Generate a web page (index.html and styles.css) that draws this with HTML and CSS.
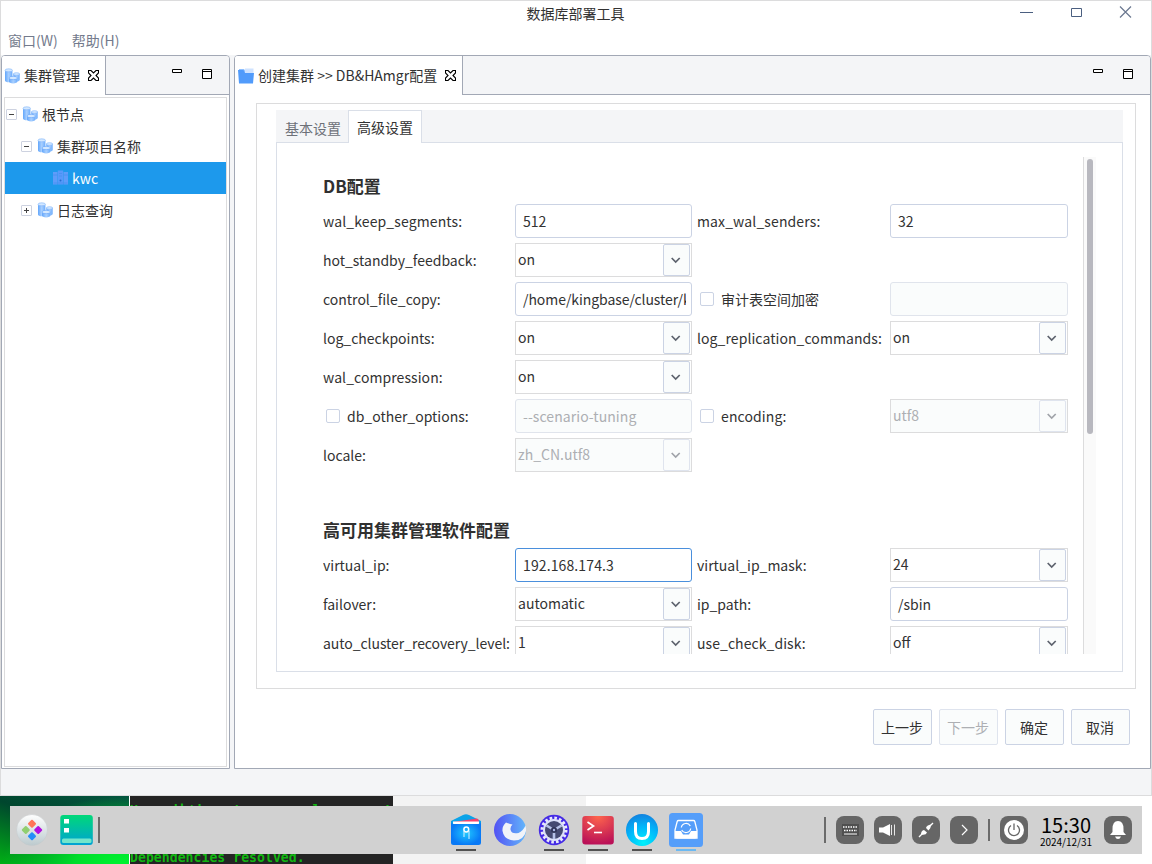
FILE: index.html
```html
<!DOCTYPE html>
<html lang="zh-CN">
<head>
<meta charset="utf-8">
<title>数据库部署工具</title>
<link rel="stylesheet" href="styles.css">
</head>
<body>
<svg class="defs" width="0" height="0">
  <defs>
    <linearGradient id="cyl" x1="0" x2="1" y1="0" y2="0"><stop offset="0" stop-color="#62a6fb"/><stop offset=".5" stop-color="#a9d0ff"/><stop offset="1" stop-color="#6cacfb"/></linearGradient>
    <symbol id="db" viewBox="0 0 16 16">
      <path d="M1 2.500v10c0 1 1.700 1.800 3.700 1.800s3.700-.8 3.700-1.800v-10z" fill="url(#cyl)"/>
      <ellipse cx="4.700" cy="2.300" rx="3.700" ry="1.500" fill="#d3e8ff" stroke="#7db4fa" stroke-width=".6"/>
      <path d="M9.300 6v6c0 .8 1.300 1.500 3.200 1.500s3.200-.7 3.200-1.500V6z" fill="url(#cyl)"/>
      <ellipse cx="12.500" cy="6" rx="3.200" ry="1.300" fill="#d3e8ff" stroke="#7db4fa" stroke-width=".6"/>
      <path d="M5 10v3.500c0 1 1.800 1.900 4.200 1.900s4.200-.9 4.200-1.900V10z" fill="url(#cyl)"/>
      <ellipse cx="9.200" cy="10" rx="4.200" ry="1.700" fill="#d3e8ff" stroke="#6ba8f9" stroke-width=".7"/>
    </symbol>
    <symbol id="close" viewBox="0 0 11 11">
      <path d="M.5.5h2.500L5.500 3 8 .5h2.500V3L8 5.500 10.500 8v2.500H8L5.500 8 3 10.500H.5V8L3 5.500.5 3z" fill="#fff" stroke="#000" stroke-width="1.100"/>
    </symbol>
    <symbol id="min" viewBox="0 0 10 4"><path d="M.5.5h9v3h-9z" fill="#fff" stroke="#000"/></symbol>
    <symbol id="max" viewBox="0 0 10 10"><path d="M.5.5h9v9h-9zM1 2.500h8" fill="#fff" stroke="#000"/></symbol>
    <symbol id="chev" viewBox="0 0 10 7"><path d="M.7 1l4 4 4-4" fill="none" stroke="currentColor" stroke-width="1.700"/></symbol>
  </defs>
</svg>

<div class="window">
  <header class="titlebar">
    <span class="title">数据库部署工具</span>
    <svg class="winctl" width="114" height="14" viewBox="0 0 114 14" fill="none" stroke="#4b5f80">
      <path d="M0 6.500h13M51.500 2.500h10v8h-10z"/><path d="M100 .5l11 11M111 .5l-11 11" stroke="#6b7890" stroke-width="1.200"/>
    </svg>
  </header>
  <nav class="menubar"><span>窗口(W)</span><span>帮助(H)</span></nav>

  <main class="work">
    <section class="panel left">
      <div class="panel-head">
        <div class="panel-tab"><svg class="ic16"><use href="#db"/></svg><span>集群管理</span><svg class="x"><use href="#close"/></svg></div>
        <div class="panel-tools"><svg class="min"><use href="#min"/></svg><svg class="max"><use href="#max"/></svg></div>
      </div>
      <div class="tree">
        <div class="node lv0"><i class="exp"></i><svg class="ic16"><use href="#db"/></svg><span>根节点</span></div>
        <div class="node lv1"><i class="exp"></i><svg class="ic16"><use href="#db"/></svg><span>集群项目名称</span></div>
        <div class="node lv2 selected">
          <svg class="ic16" viewBox="0 0 16 16"><path d="M1 2h4.500v12.500H1zM11.500 2H16v12.500h-4.500z" fill="#5e9cfa"/><path d="M5.800.5h5.400v14H5.800z" fill="#5799fb"/><path d="M1 5h4.500M11.500 5H16M7 3.500h3M7 6h3M1.500 13h14" stroke="#468ff0" stroke-width=".8"/><circle cx="8.500" cy="10.500" r="1" fill="#246fd0"/></svg>
          <span>kwc</span></div>
        <div class="node lv1"><i class="exp plus"></i><svg class="ic16"><use href="#db"/></svg><span>日志查询</span></div>
      </div>
    </section>

    <section class="panel right">
      <div class="panel-head">
        <div class="panel-tab"><svg class="ic16" viewBox="0 0 16 16"><path d="M1 1h5l1 1.500h8V8H1z" fill="#8fc0ff"/><path d="M7 .5h8.500V5H7z" fill="#d0e3ff"/><path d="M0 2h5.500l1.500 3H16l-1 10.500H1z" fill="#519bfb"/></svg><span>创建集群 &gt;&gt; DB&amp;HAmgr配置</span><svg class="x"><use href="#close"/></svg></div>
        <div class="panel-tools"><svg class="min"><use href="#min"/></svg><svg class="max"><use href="#max"/></svg></div>
      </div>
      <div class="editor">
        <div class="frame">
          <div class="tabs"><div class="tab">基本设置</div><div class="tab active">高级设置</div></div>
          <div class="tab-body">
            <div class="viewport">
              <div class="form">
                <h2>DB配置</h2>
                <label class="wide">wal_keep_segments:</label><div class="input">512</div>
                <label class="wide">max_wal_senders:</label><div class="input">32</div>

                <label>hot_standby_feedback:</label><div class="select"><span>on</span><b><svg><use href="#chev"/></svg></b></div>
                <span></span><span></span>

                <label>control_file_copy:</label><div class="input"><span class="clip">/home/kingbase/cluster/k</span></div>
                <label class="check"><i></i>审计表空间加密</label><div class="input off"></div>

                <label>log_checkpoints:</label><div class="select"><span>on</span><b><svg><use href="#chev"/></svg></b></div>
                <label class="slightly">log_replication_commands:</label><div class="select"><span>on</span><b><svg><use href="#chev"/></svg></b></div>

                <label class="slightly">wal_compression:</label><div class="select"><span>on</span><b><svg><use href="#chev"/></svg></b></div>
                <span></span><span></span>

                <label class="check"><i></i>db_other_options:</label><div class="input off slightly">--scenario-tuning</div>
                <label class="check wide"><i></i>encoding:</label><div class="select off"><span>utf8</span><b><svg><use href="#chev"/></svg></b></div>

                <label>locale:</label><div class="select off"><span>zh_CN.utf8</span><b><svg><use href="#chev"/></svg></b></div>
                <span></span><span></span>

                <h2 class="second">高可用集群管理软件配置</h2>
                <label>virtual_ip:</label><div class="input focus wide">192.168.174.3</div>
                <label>virtual_ip_mask:</label><div class="select"><span>24</span><b><svg><use href="#chev"/></svg></b></div>

                <label>failover:</label><div class="select"><span>automatic</span><b><svg><use href="#chev"/></svg></b></div>
                <label>ip_path:</label><div class="input">/sbin</div>

                <label class="narrow">auto_cluster_recovery_level:</label><div class="select"><span>1</span><b><svg><use href="#chev"/></svg></b></div>
                <label class="slightly">use_check_disk:</label><div class="select"><span>off</span><b><svg><use href="#chev"/></svg></b></div>
              </div>
              <div class="scroll"><div class="thumb"></div></div>
            </div>
          </div>
        </div>
        <div class="buttons"><button>上一步</button><button disabled>下一步</button><button>确定</button><button>取消</button></div>
      </div>
    </section>
  </main>
</div>

<div class="desktop">
  <div class="wall"></div>
  <div class="term"><div class="line1">Upgradi/d    t         l        t</div><div class="line2">Dependencies resolved.</div></div>
  <div class="pane"></div>
</div>

<footer class="taskbar">
  <div class="group start">
    <svg width="32" height="34" viewBox="0 0 32 34">
      <defs><linearGradient id="lg" x2="0" y2="1"><stop stop-color="#fff"/><stop offset="1" stop-color="#bccace"/></linearGradient>
      <linearGradient id="g1"><stop stop-color="#ff9650"/><stop offset="1" stop-color="#ff5a62"/></linearGradient><linearGradient id="g2"><stop stop-color="#a9d356"/><stop offset="1" stop-color="#72c98d"/></linearGradient></defs>
      <circle cx="16" cy="17" r="15.500" fill="url(#lg)" stroke="#c5c8ca" stroke-width=".5"/>
      <g stroke-linejoin="round" stroke-width="2"><path d="M16 7.800l3 3-3 3-3-3z" fill="url(#g1)" stroke="#ff7559"/><path d="M9.800 14l3 3-3 3-3-3z" fill="url(#g2)" stroke="#91cf70"/><path d="M22.200 14l3 3-3 3-3-3z" fill="#b210df" stroke="#b210df"/><path d="M16 20.200l3 3-3 3-3-3z" fill="#238df8" stroke="#238df8"/></g>
    </svg>
    <svg width="34" height="32" viewBox="0 0 34 32">
      <defs><linearGradient id="tg" x2="0" y2="1"><stop stop-color="#00d878"/><stop offset="1" stop-color="#00a2d4"/></linearGradient></defs>
      <rect x=".3" y="1" width="32.500" height="30" rx="3" fill="url(#tg)"/><path d="M4 5h5v4.500H4zM4 14h5v4.500H4z" fill="#fff"/><rect x="2" y="24.500" width="29.500" height="4.500" rx="1.500" fill="#72e5cb"/>
    </svg>
    <i class="bar"></i>
  </div>

  <div class="group apps">
    <div class="app"><svg viewBox="0 0 34 34"><defs><radialGradient id="a1"><stop stop-color="#20c8ff"/><stop offset="1" stop-color="#0879f6"/></radialGradient></defs>
      <path d="M2 8L14 2q3-1.500 6 0l12 6v12H2z" fill="#0ba3e8"/><path d="M4 9l24-3.500q3 1 1 6H4z" fill="#f6416c"/><path d="M4 8.500h26v3H4z" fill="#fff"/><path d="M2 8.500q0 2.500 3 2.500h24q3 0 3-2.500v21q0 2.500-2.500 2.500h-25Q2 32 2 29.500z" fill="url(#a1)"/><circle cx="17.300" cy="16.500" r="2.400" fill="none" stroke="#fff" stroke-width="1.500"/><path d="M15 18v6M20 18v8" stroke="#d8f2ff"/></svg><i></i></div>
    <div class="app none"><svg viewBox="0 0 34 34"><defs><linearGradient id="a2"><stop stop-color="#5252f3"/><stop offset="1" stop-color="#62b6fb"/></linearGradient></defs>
      <circle cx="17" cy="17" r="16" fill="url(#a2)"/><path d="M13 9.500Q9 13 9.500 18q1.500 9 11.500 9.500 10 0 12-9.500.3-2.500-.5-5.500Q30 18 25.500 20q-7 1.500-8-3.500-.3-3 2-5-4-1-6.500-2z" fill="#f0f3f9"/></svg><i></i></div>
    <div class="app"><svg viewBox="0 0 34 34"><circle cx="17" cy="17" r="15.200" fill="#452be5"/><circle cx="17" cy="17" r="11" fill="#dce1fa"/><circle cx="17" cy="17" r="12" fill="none" stroke="#e8eafa" stroke-width="3" stroke-dasharray="2.600 2.110"/><circle cx="17" cy="17" r="9" fill="#454a72"/><path d="M17 17L9.500 12.500M17 17l7.500-4.500M17 17v9" stroke="#b7c2e8" stroke-width="2.600"/><circle cx="17" cy="17" r="3" fill="#303458"/><circle cx="17" cy="17" r="1.200" fill="#aab7e5"/></svg><i></i></div>
    <div class="app"><svg viewBox="0 0 34 34"><defs><radialGradient id="a4" cx=".5" cy="0" r="1"><stop stop-color="#ff664c"/><stop offset="1" stop-color="#ba1057"/></radialGradient></defs><rect x="1.300" y="3" width="31.500" height="28.500" rx="3" fill="url(#a4)"/><path d="M6.500 9l6 4-6 4" fill="none" stroke="#fff" stroke-width="1.700"/><path d="M13 19.500h8" stroke="#fff" stroke-width="1.600"/></svg><i></i></div>
    <div class="app"><svg viewBox="0 0 34 34"><defs><radialGradient id="a5" cx=".55" cy=".9" r=".9"><stop stop-color="#00f0fb"/><stop offset=".55" stop-color="#00b7fb"/><stop offset="1" stop-color="#1383df"/></radialGradient></defs><circle cx="17" cy="17" r="16" fill="url(#a5)"/><path d="M10.500 10.500v8q0 7 6.500 7t6.500-7v-8" fill="none" stroke="#fff" stroke-width="3" stroke-linecap="round"/></svg><i></i></div>
    <div class="app current"><svg viewBox="0 0 34 34"><rect width="34" height="34" rx="3.500" fill="#559efa"/><path d="M9.500 7.500h15q1 0 1.300 1L28 17v8H6v-8l2.200-8.500q.3-1 1.300-1z" fill="none" stroke="#fff" stroke-width="1.300"/><path d="M6 18h6l2 3.500h6l2-3.500h6v5.500q0 2-2 2H8q-2 0-2-2z" fill="#fff"/><path d="M12.300 14.500a4.800 4.800 0 0 1 9-1.500M21.700 15.500a4.800 4.800 0 0 1-9 1.500" fill="none" stroke="#fff" stroke-width="1.200"/></svg><i></i></div>
  </div>

  <div class="group tray">
    <i class="bar"></i>
    <div class="chip"><svg viewBox="0 0 28 28"><rect x="6" y="8" width="17" height="12" fill="#4f4f4f"/><path d="M7 11h14M8 14.500h13" stroke="#fff" stroke-width="1.300" stroke-dasharray="1.500 1"/><path d="M8 18h13" stroke="#fff"/></svg></div>
    <div class="chip"><svg viewBox="0 0 28 28"><path d="M5 11.500h4L16 8v12l-7-3.500H5z" fill="#fff"/><path d="M17.500 9v10M20.500 8.500v11" stroke="#e8e8e8" stroke-width="1"/></svg></div>
    <div class="chip"><svg viewBox="0 0 28 28"><path d="M7 21l5-5M16 12l5-5" stroke="#fff" stroke-width="1.400"/><path d="M9 18.500q0-4 3-4.500l3 2.500q-1 3-6 2zM14 12q.5-3 5-3.500 0 4-2.500 6z" fill="#fff"/></svg></div>
    <div class="chip"><svg viewBox="0 0 28 28"><path d="M12 9l5 5-5 5" fill="none" stroke="#fff" stroke-width="1.200"/></svg></div>
    <i class="bar short"></i>
    <div class="chip"><svg viewBox="0 0 28 28"><circle cx="14" cy="14" r="10" fill="#fff"/><path d="M11 9.500a5.500 5.500 0 1 0 6 0M14 7.500v6.500" fill="none" stroke="#666" stroke-width="1.300"/></svg></div>
    <div class="clock"><span class="time">15:30</span><span class="date">2024/12/31</span></div>
    <div class="chip"><svg viewBox="0 0 28 28"><path d="M14 5q5.500 0 5.500 8v3l2.500 3H6l2.500-3v-3q0-8 5.500-8zM11 20.500h6q-1 2.500-3 2.500t-3-2.500z" fill="#fff"/></svg></div>
  </div>
</footer>
</body>
</html>
```
FILE: styles.css
```css
* { box-sizing: border-box; }
body {
  margin: 0; width: 1152px; height: 864px; overflow: hidden; position: relative;
  font: 14px/20px "Noto Sans CJK SC", sans-serif; color: #323232; background: #fff;
}
.defs { position: absolute; }
svg { display: block; flex: none; }

.window { height: 796px; border: 1px solid #dcdcdd; display: flex; flex-direction: column; background: #fff; }
.titlebar { height: 27px; display: flex; justify-content: flex-end; padding: 5px 17px 0 0; position: relative; }
.title { position: absolute; left: 0; right: 1px; top: 2px; text-align: center; }
.menubar { height: 27px; display: flex; gap: 14px; padding: 2px 7px; color: #737a8c; }

.work { flex: 1; display: flex; gap: 4px; padding-bottom: 26px; background: #f4f5f7; }
.panel { border: 1px solid #a2a8b5; border-radius: 4px 4px 0 0; background: #fff; display: flex; flex-direction: column; overflow: hidden; }
.left { width: 229px; }
.right { flex: 1; }
.panel-head { height: 39px; flex: none; display: flex; background: #f4f5f7; }
.panel-tab { display: flex; align-items: center; background: #fff; border-right: 1px solid #a2a8b5; padding-left: 2px; }
.left .panel-tab { width: 104px; }
.right .panel-tab { width: 228px; padding-left: 3px; }
.panel-tab span { margin-left: 4px; padding-bottom: 2px; white-space: nowrap; }
.ic16 { width: 16px; height: 16px; }
.x { width: 11px; height: 11px; margin: 0 0 1px 7.500px; }
.panel-tools { flex: 1; display: flex; justify-content: flex-end; align-items: flex-start; gap: 20px; padding: 13px 17px 0 0; border-bottom: 1px solid #a2a8b5; }
.min { width: 10px; height: 4px; }
.max { width: 10px; height: 10px; }

.tree { flex: 1; margin: 2px 2px 1px; border: 1px solid #dcdcdd; }
.node { height: 32px; display: flex; align-items: center; }
.node span { margin-left: 4px; line-height: 20px; }
.lv0 { padding-left: 1px; }
.lv1 { padding-left: 16px; }
.lv2 { padding-left: 47px; }
.selected { background: #1d99ec; color: #fff; }
.exp { width: 11px; height: 11px; border: 1px solid #cdd2e0; border-radius: 1px; margin-right: 5px; background: linear-gradient(#444, #444) center / 5px 1px no-repeat; }
.exp.plus { background: linear-gradient(#444, #444) center / 5px 1px no-repeat, linear-gradient(#444, #444) center / 1px 5px no-repeat; }

.editor { flex: 1; padding: 8px 14px 0 21px; display: flex; flex-direction: column; }
.frame { height: 586px; border: 1px solid #dcdcdd; padding: 6px 12px 16px 19px; display: flex; flex-direction: column; }
.tabs { height: 32px; background: #f4f5f7; display: flex; color: #6d7179; }
.tab { width: 73px; padding: 8px 0 0 9px; white-space: nowrap; }
.tab.active { width: 74px; height: 33px; margin-left: -1px; background: #fff; color: #323232; border: 1px solid #dadfe8; border-bottom: 0; padding: 6px 0 0 8px; position: relative; }
.tab-body { flex: 1; min-height: 0; border: 1px solid #dadfe8; padding: 14px 26px 17px 46px; }
.viewport { height: 497px; overflow: hidden; display: flex; justify-content: space-between; align-items: flex-start; }
.form { display: grid; grid-template-columns: 187px 177px 188px 178px; grid-template-rows: 42px; grid-auto-rows: auto; gap: 5px; }
.form h2 { grid-column: 1 / -1; margin: 0; font-size: 17px; line-height: 28px; padding-top: 15px; color: #303030; }
.form h2.second { height: 66px; padding-top: 39px; }
.form label { height: 34px; line-height: 35px; white-space: nowrap; }
.form .wide { letter-spacing: .12px; }
.slightly { letter-spacing: .07px; }
.narrow { letter-spacing: -.06px; }
.check { display: flex; padding-left: 3px; }
.check i { width: 14px; height: 14px; border: 1px solid #cbd3e4; border-radius: 2px; margin: 10px 7px 0 0; }
.input { height: 34px; border: 1px solid #cbd3e4; border-radius: 3px; padding: 0 5px 0 7px; line-height: 33px; overflow: hidden; white-space: nowrap; }
.clip { display: block; overflow: hidden; letter-spacing: -.06px; }
.focus { border-color: #4a8fdc; }
.select { height: 34px; border: 1px solid #dcdcdd; display: flex; justify-content: space-between; padding-right: 1px; padding-left: 2px; line-height: 31px; }
.select b { width: 27px; height: 32px; border: 1px solid #cbd3e4; border-radius: 2px; background: #fafcfc; padding: 12px 0 0 7px; color: #5d626d; }
.select b svg { width: 10px; height: 7px; }
.off { background: #fafcfc; color: #adafb3; border-color: #e0e4ec; }
.select.off { border-color: #dcdcdd; }
.off b { color: #a0a3a9; border-color: #dfe4ee; }
.scroll { width: 13px; height: 497px; border-left: 1px solid #dcdcdd; background: #fafafa; padding: 2px 3px; }
.thumb { width: 6px; height: 275px; border-radius: 3px; background: #b8b8bf; }
.buttons { display: flex; justify-content: flex-end; gap: 7px; padding: 20px 6px 0 0; }
button { font: inherit; color: inherit; width: 59px; height: 36px; border: 1px solid #cbd3e4; border-radius: 2px; background: #fafcfc; padding: 0 1px 1px 0; white-space: nowrap; }
button:disabled { color: #adafb3; border-color: #dfe4ee; }

.desktop { height: 68px; display: flex; }
.wall { width: 129px; background: radial-gradient(ellipse at 95% 105%, #00f532 0, #00dd2b 28%, transparent 70%), linear-gradient(20deg, #00b015, #00462e 55%, #045640); }
.term { width: 263px; margin-left: 1px; background: #242424; color: #11b711; font: bold 13.200px/16px "DejaVu Sans Mono", monospace; overflow: hidden; white-space: pre; }
.line1 { padding-top: 7px; height: 54px; }
.pane { width: 193px; background: #f3f3f3; }

.taskbar { position: absolute; left: 10px; top: 806px; width: 1132px; height: 48px; background: #d1d1d1; display: flex; justify-content: space-between; }
.group { display: flex; align-items: center; }
.start { padding-left: 6px; gap: 12px; width: 439px; }
.start .bar { margin-left: -8px; }
.bar { width: 2px; height: 26px; background: #6b6b6b; }
.apps { gap: 10px; flex: 1; align-items: flex-start; }
.app { width: 34px; padding-top: 7px; }
.app svg { width: 34px; height: 34px; }
.app i { display: block; width: 20px; height: 2px; margin: 2px auto 0; background: #515151; }
.app.none i { background: none; }
.app.current i { background: #6bb9f2; }
.tray { gap: 10px; padding-right: 10px; }
.bar.short { height: 22px; }
.chip { width: 28px; height: 28px; border-radius: 8px; background: #666; }
.chip svg { width: 28px; height: 28px; }
.clock { width: 56px; display: flex; flex-direction: column; align-items: center; color: #000; }
.time { font-size: 20px; line-height: 22px; padding-top: 1px; }
.date { font-size: 10px; line-height: 12px; }
```
